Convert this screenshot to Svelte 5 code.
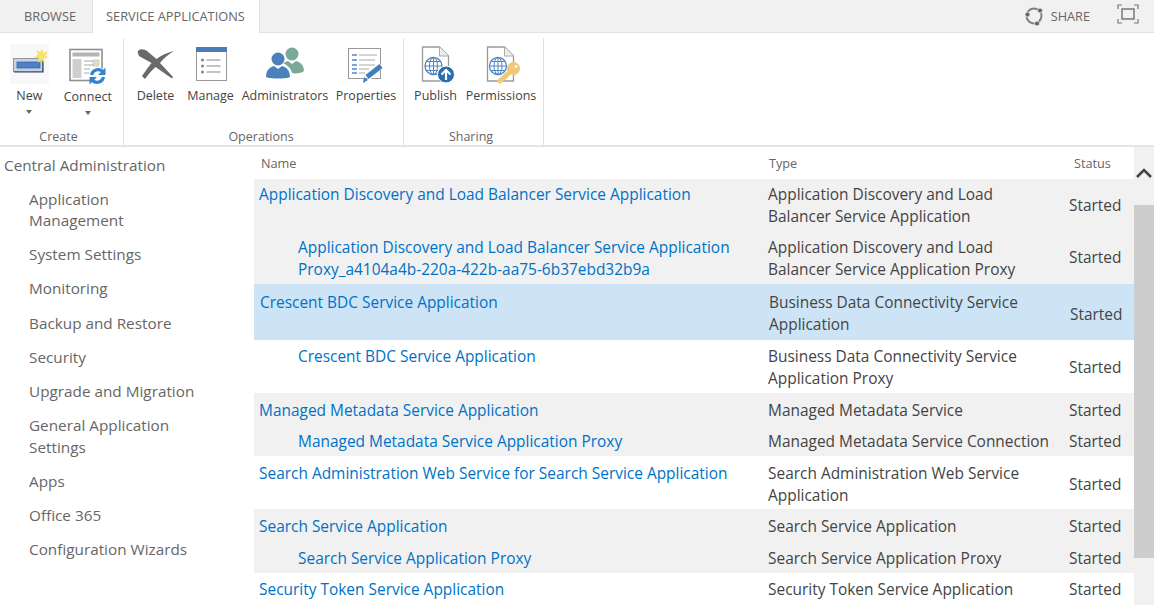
<script lang="ts">
	interface Row {
		name: string;
		type: string;
		child?: boolean;
		shade?: boolean;
		selected?: boolean;
		height: number;
		pad: number;
	}

	const nav = [
		'Application Management',
		'System Settings',
		'Monitoring',
		'Backup and Restore',
		'Security',
		'Upgrade and Migration',
		'General Application Settings',
		'Apps',
		'Office 365',
		'Configuration Wizards'
	];

	const rows: Row[] = [
		{ name: 'Application Discovery and Load Balancer Service Application', type: 'Application Discovery and Load Balancer Service Application', shade: true, height: 53, pad: 4 },
		{ name: 'Application Discovery and Load Balancer Service Application Proxy_a4104a4b-220a-422b-aa75-6b37ebd32b9a', type: 'Application Discovery and Load Balancer Service Application Proxy', child: true, shade: true, height: 52, pad: 4 },
		{ name: 'Crescent BDC Service Application', type: 'Business Data Connectivity Service Application', selected: true, height: 56, pad: 7 },
		{ name: 'Crescent BDC Service Application', type: 'Business Data Connectivity Service Application Proxy', child: true, height: 53, pad: 5 },
		{ name: 'Managed Metadata Service Application', type: 'Managed Metadata Service', shade: true, height: 32, pad: 6 },
		{ name: 'Managed Metadata Service Application Proxy', type: 'Managed Metadata Service Connection', child: true, shade: true, height: 31, pad: 5 },
		{ name: 'Search Administration Web Service for Search Service Application', type: 'Search Administration Web Service Application', height: 53, pad: 6 },
		{ name: 'Search Service Application', type: 'Search Service Application', shade: true, height: 32, pad: 6 },
		{ name: 'Search Service Application Proxy', type: 'Search Service Application Proxy', child: true, shade: true, height: 32, pad: 6 },
		{ name: 'Security Token Service Application', type: 'Security Token Service Application', height: 32, pad: 5 }
	];
</script>

<div class="page">
	<header class="tabs">
		<div class="tab">BROWSE</div>
		<div class="tab active">SERVICE APPLICATIONS</div>
		<div class="tab-actions">
			<svg class="share-icon" width="20" height="20" viewBox="0 0 20 20">
				<circle cx="9" cy="10" r="7.5" fill="none" stroke="#808080" stroke-width="2" />
				<circle cx="15" cy="4.500" r="2.500" fill="#666" stroke="#f1f1f1" stroke-width=".8" />
				<circle cx="2.500" cy="8.500" r="2.500" fill="#666" stroke="#f1f1f1" stroke-width=".8" />
				<circle cx="12" cy="17.500" r="2.500" fill="#666" stroke="#f1f1f1" stroke-width=".8" />
			</svg>
			<span class="share">SHARE</span>
			<svg class="focus-icon" width="22" height="20" viewBox="0 0 22 20">
				<rect x="5" y="5" width="12" height="10" fill="none" stroke="#666" stroke-width="1.300" />
				<path d="M1 5V1H5M17 1H21V5M21 15V19H17M5 19H1V15" fill="none" stroke="#777" stroke-width="1.200" />
			</svg>
		</div>
	</header>

	<section class="ribbon">
		<div class="group create">
			<div class="tools">
				<div class="tool new">
					<svg width="40" height="40" viewBox="0 0 40 40">
						<rect x="1" y="0" width="39" height="40" fill="#f8f8f8" />
						<rect x="4.500" y="14.500" width="29" height="13" fill="#c8d2e2" stroke="#8b96a8" />
						<path d="M34 15V28H5" fill="none" stroke="#34495f" stroke-width="1.200" />
						<rect x="8" y="18" width="23" height="6" fill="#4f7fc9" stroke="#3a68ad" stroke-width=".8" />
						<path d="M33 4l1.500 5 4.500-2-2.500 4.500 3 2-4.500 1 .5 5-3-4-3.500 3.500 .5-5-4.500-1 4-2.500-2-4.500 4.500 2z" fill="#f7e26b" />
					</svg>
					<span class="label">New</span>
					<i class="caret"></i>
				</div>
				<div class="tool connect">
					<svg width="38" height="44" viewBox="0 0 38 44">
						<rect x="1" y="5.500" width="32" height="31" fill="#fff" stroke="#8f8f8f" stroke-width="1.600" />
						<rect x="3.500" y="8.500" width="27" height="4" fill="#b4b4b4" />
						<rect x="3.500" y="15" width="9" height="19" fill="#cfcfcf" />
						<path d="M15 17h9M15 21h9M15 25h6M15 29h6" stroke="#aaa" stroke-width="1.200" />
						<rect x="24" y="16" width="6" height="6" fill="#e8dcc0" stroke="#bbb" stroke-width=".6" />
						<circle cx="28.500" cy="32" r="9" fill="#fff" />
						<path d="M22.500 31a6.500 6.500 0 0 1 11-3.500" fill="none" stroke="#2f86cf" stroke-width="3.200" />
						<path d="M36.500 23.500v7.500h-7.500z" fill="#2f86cf" />
						<path d="M34.500 33a6.500 6.500 0 0 1-11 3.500" fill="none" stroke="#2f86cf" stroke-width="3.200" />
						<path d="M20.500 40.500v-7.500h7.500z" fill="#2f86cf" />
					</svg>
					<span class="label">Connect</span>
					<i class="caret"></i>
				</div>
			</div>
			<div class="group-name">Create</div>
		</div>

		<div class="group operations">
			<div class="tools">
				<div class="tool">
					<svg width="38" height="38" viewBox="0 0 38 38">
						<path d="M.5 6C2 2 7 3 10 5L19.500 13C24 9.500 30 6.500 37 5 30.500 9 26 13 23 17L36 31 35 32.500 18.500 21C14 25 11 29 8 33L5 30C8 25.500 11.500 21 14.500 17L2 10Z" fill="#6a6a6a" />
					</svg>
					<span class="label">Delete</span>
				</div>
				<div class="tool">
					<svg width="34" height="38" viewBox="0 0 34 38">
						<rect x="2.500" y="1.500" width="30" height="33" fill="#fff" stroke="#9a9a9a" />
						<rect x="2" y="1" width="31" height="5" fill="#4a7db8" />
						<circle cx="8.500" cy="14" r="1.600" fill="#8b8b8b" />
						<circle cx="8.500" cy="20" r="1.600" fill="#8b8b8b" />
						<circle cx="8.500" cy="26" r="1.600" fill="#8b8b8b" />
						<path d="M12.500 14h14M12.500 20h14M12.500 26h14" stroke="#888" stroke-width="1.200" />
					</svg>
					<span class="label">Manage</span>
				</div>
				<div class="tool">
					<svg width="38" height="38" viewBox="0 0 38 38">
						<circle cx="26" cy="8" r="6.500" fill="#7ba998" />
						<path d="M17 17L22 15 26 18 30 15C34 16 38 19 38 25 36 27 30 28 26 27 25 22 21 19 17 17Z" fill="#7ba998" />
						<circle cx="12" cy="13" r="6.500" fill="#4a80bc" />
						<path d="M0 31C0 24 4 21 8 20L12 23 16 20C20 21 24 24 24 31 20 33 4 33 0 31Z" fill="#4a80bc" />
					</svg>
					<span class="label">Administrators</span>
				</div>
				<div class="tool">
					<svg width="38" height="38" viewBox="0 0 38 38">
						<rect x="1.500" y="2.500" width="32" height="30" fill="#fff" stroke="#999" />
						<path d="M5 9h5M5 14h5M5 19h5M5 23h5M5 27h5" stroke="#4f8ac9" stroke-width="1.400" />
						<path d="M12 9h18M12 14h16M12 19h16M12 23h10M12 27h6" stroke="#aaa" stroke-width="1.200" />
						<path d="M20 32L34 19" stroke="#fff" stroke-width="7" />
						<path d="M20 31L34 20" stroke="#3f7fc1" stroke-width="5" />
						<path d="M16 37l1-6 4 3z" fill="#3f7fc1" />
					</svg>
					<span class="label">Properties</span>
				</div>
			</div>
			<div class="group-name">Operations</div>
		</div>

		<div class="group sharing">
			<div class="tools">
				<div class="tool">
					<svg width="38" height="38" viewBox="0 0 38 38">
						<path d="M5.500 1h17l9 9v25h-26z" fill="#fff" stroke="#9a9a9a" stroke-width="1.300" />
						<path d="M22.500 1v9h9" fill="#eee" stroke="#aaa" />
						<circle cx="16.500" cy="20" r="8.500" fill="#fff" stroke="#4f86c0" stroke-width="1.300" />
						<path d="M8 20h17M16.500 11.500v17M10 15.500h13M10 24.500h13" stroke="#4f86c0" />
						<ellipse cx="16.500" cy="20" rx="4" ry="8.500" fill="none" stroke="#4f86c0" />
						<circle cx="29" cy="28.500" r="8.500" fill="#2a6eaf" stroke="#fff" />
						<path d="M29 34v-10M24.500 28.500l4.500-4.500 4.500 4.500" fill="none" stroke="#fff" stroke-width="2.200" />
					</svg>
					<span class="label">Publish</span>
				</div>
				<div class="tool">
					<svg width="38" height="38" viewBox="0 0 38 38">
						<path d="M5.500 1h17l9 9v25h-26z" fill="#fff" stroke="#9a9a9a" stroke-width="1.300" />
						<path d="M22.500 1v9h9" fill="#eee" stroke="#aaa" />
						<circle cx="16" cy="20" r="8.500" fill="#fff" stroke="#4f86c0" stroke-width="1.300" />
						<path d="M7.500 20h17M16 11.500v17M9.500 15.500h13M9.500 24.500h13" stroke="#4f86c0" />
						<ellipse cx="16" cy="20" rx="4" ry="8.500" fill="none" stroke="#4f86c0" />
						<path d="M29 25L18 35" stroke="#f0c877" stroke-width="5" stroke-linecap="round" />
						<circle cx="31.500" cy="22.500" r="6.500" fill="#f0c877" />
						<circle cx="34" cy="20.500" r="1.300" fill="#fff" />
					</svg>
					<span class="label">Permissions</span>
				</div>
			</div>
			<div class="group-name">Sharing</div>
		</div>
	</section>

	<div class="content">
		<nav class="sidenav">
			<div class="nav-root">Central Administration</div>
			<ul>
				{#each nav as item}
					<li>{item}</li>
				{/each}
			</ul>
		</nav>

		<main class="list">
			<table>
				<thead>
					<tr>
						<th class="col-name">Name</th>
						<th class="col-type">Type</th>
						<th class="col-status">Status</th>
					</tr>
				</thead>
				<tbody>
					{#each rows as row}
						<tr class:shade={row.shade} class:selected={row.selected} style="height: {row.height}px; --pad: {row.pad}px">
							<td class="name" class:child={row.child}><span class="link">{row.name}</span></td>
							<td class="type">{row.type}</td>
							<td class="status">Started</td>
						</tr>
					{/each}
				</tbody>
			</table>
		</main>

		<aside class="scrollbar">
			<svg width="16" height="10" viewBox="0 0 16 10">
				<path d="M1 9l7-7 7 7" fill="none" stroke="#444" stroke-width="2.600" />
			</svg>
			<div class="thumb"></div>
		</aside>
	</div>
</div>

<style>
	:global(body) {
		margin: 0;
		background: #fff;
		overflow: hidden;
	}

	.page {
		width: 1154px;
		height: 605px;
		overflow: hidden;
		display: flex;
		flex-direction: column;
		font-family: "Open Sans", "Noto Sans", sans-serif;
		color: #444;
	}

	.tabs {
		height: 32px;
		flex: none;
		display: flex;
		background: #f1f1f1;
		border-bottom: 1px solid #e1e1e1;
	}

	.tab {
		width: 93px;
		padding-left: 24px;
		line-height: 32px;
		font-size: 12.800px;
		color: #666;
		box-sizing: border-box;
		border-right: 1px solid #e1e1e1;
	}

	.tab.active {
		width: 167px;
		padding-left: 13px;
		background: #fff;
		height: 33px;
	}

	.tab-actions {
		margin-left: auto;
		display: flex;
		align-items: center;
		padding-right: 15px;
	}

	.focus-icon {
		margin-bottom: 4px;
	}

	.share {
		font-size: 12.700px;
		color: #666;
		margin: 0 27px 0 6px;
	}

	.ribbon {
		height: 107px;
		flex: none;
		display: flex;
		border-bottom: 2px solid #e4e4e4;
		padding-top: 5px;
	}

	.group {
		display: flex;
		flex-direction: column;
		border-right: 1px solid #e1e1e1;
		box-sizing: border-box;
		height: 107px;
	}

	.create { width: 124px; padding-left: 6px; }
	.operations { width: 280px; padding-left: 7px; }
	.sharing { width: 140px; padding-left: 5px; }

	.tools {
		flex: 1;
		display: flex;
	}

	.tool {
		display: flex;
		flex-direction: column;
		align-items: center;
		padding-top: 8px;
		box-sizing: border-box;
		font-size: 12.500px;
	}

	.create .tool { width: 48px; margin-right: 8px; padding-top: 6px; }
	.create .connect { width: 56px; }
	.connect .label { margin-top: 0; }
	.operations .tool:nth-child(1) { width: 49px; margin-right: 4px; }
	.operations .tool:nth-child(2) { width: 53px; }
	.operations .tool:nth-child(3) { width: 96px; }
	.operations .tool:nth-child(4) { width: 66px; }
	.sharing .tool:nth-child(1) { width: 53px; }
	.sharing .tool:nth-child(2) { width: 78px; }

	.label {
		margin-top: 3px;
		line-height: 18px;
		white-space: nowrap;
		color: #444;
	}

	.caret {
		margin-top: 5px;
		border: 3px solid transparent;
		border-top: 4px solid #666;
		border-bottom: 0;
	}

	.group-name {
		text-align: center;
		font-size: 12.500px;
		color: #666;
		line-height: 16px;
	}

	.create .group-name { padding-right: 12px; }
	.operations .group-name { padding-right: 12px; }
	.sharing .group-name { padding-right: 10px; }

	.content {
		flex: 1;
		display: flex;
		min-height: 0;
	}

	.sidenav {
		width: 254px;
		flex: none;
		font-size: 15.300px;
		color: #666;
		padding-top: 8px;
		box-sizing: border-box;
	}

	.nav-root {
		padding-left: 4px;
		line-height: 20px;
	}

	ul {
		list-style: none;
		margin: 13.500px 0 0;
		padding: 0 0 0 29px;
	}

	li {
		max-width: 175px;
		line-height: 21.500px;
		margin-bottom: 12.700px;
	}

	.list {
		width: 880px;
		flex: none;
		overflow: hidden;
	}

	table {
		width: 880px;
		border-collapse: collapse;
		table-layout: fixed;
	}

	th {
		box-sizing: border-box;
		height: 32px;
		padding: 0 0 0 7px;
		text-align: left;
		font-weight: 400;
		font-size: 12.700px;
		color: #666;
	}

	.col-name { width: 509px; }
	.col-type { width: 301px; padding-left: 6px; }
	.col-status { padding-left: 10px; }

	td {
		padding: var(--pad) 5px 0;
		font-size: 15.450px;
		line-height: 22px;
		color: #444;
		vertical-align: top;
	}

	tr.shade td { background: #f1f1f1; }
	tr.selected td { background: #cde4f6; padding-left: 6px; }

	td.child {
		padding-left: 44px;
		padding-right: 30px;
	}

	td.type {
		padding-right: 10px;
	}

	td.status {
		vertical-align: middle;
		padding-top: calc(var(--pad) * 2 - 8px);
		padding-bottom: 2px;
	}

	.link {
		color: #0072c6;
	}

	.scrollbar {
		width: 20px;
		flex: none;
		background: #f1f1f1;
		display: flex;
		flex-direction: column;
		align-items: center;
	}

	.scrollbar svg {
		margin-top: 21px;
	}

	.thumb {
		width: 20px;
		height: 353px;
		margin-top: 27px;
		background: #cdcdcd;
	}
</style>
